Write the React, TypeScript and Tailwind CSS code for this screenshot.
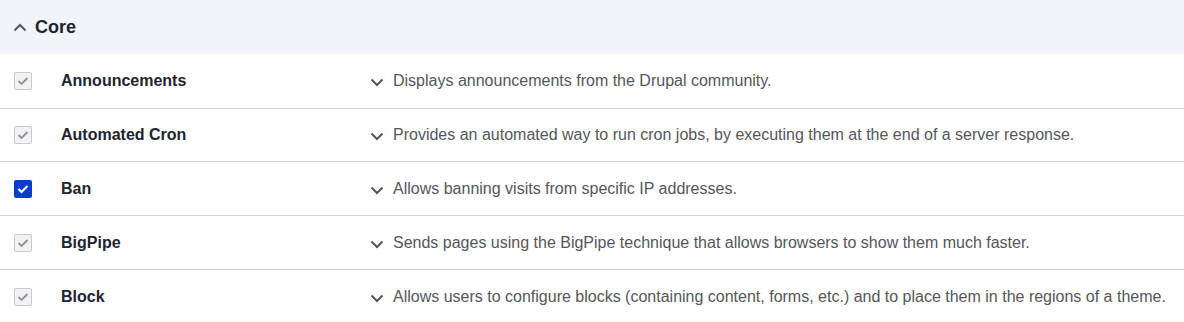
import React from 'react';

type Mod = { name: string; desc: string; locked: boolean; h: string };

const modules: Mod[] = [
  { name: 'Announcements', desc: 'Displays announcements from the Drupal community.', locked: true, h: 'h-[55px]' },
  { name: 'Automated Cron', desc: 'Provides an automated way to run cron jobs, by executing them at the end of a server response.', locked: true, h: 'h-[53px]' },
  { name: 'Ban', desc: 'Allows banning visits from specific IP addresses.', locked: false, h: 'h-[54px]' },
  { name: 'BigPipe', desc: 'Sends pages using the BigPipe technique that allows browsers to show them much faster.', locked: true, h: 'h-[54px]' },
  { name: 'Block', desc: 'Allows users to configure blocks (containing content, forms, etc.) and to place them in the regions of a theme.', locked: true, h: 'h-[54px]' },
];

const Chevron = ({ up }: { up?: boolean }) => (
  <svg width="14" height="9" viewBox="0 0 14 9" fill="none" className={up ? 'rotate-180' : ''}>
    <path d="M1.5 1.5L7 7L12.5 1.5" stroke="#545560" strokeWidth="2" />
  </svg>
);

const Check = ({ locked }: { locked: boolean }) =>
  locked ? (
    <span className="flex h-[18px] w-[18px] items-center justify-center rounded-[2px] border border-[#c9cacf] bg-[#f2f2f3]">
      <svg width="12" height="10" viewBox="0 0 12 10" fill="none">
        <path d="M1.5 5L4.5 8L10.5 2" stroke="#8e929c" strokeWidth="1.8" />
      </svg>
    </span>
  ) : (
    <span className="flex h-[18px] w-[18px] items-center justify-center rounded-[2px] bg-[#003ecc]">
      <svg width="12" height="10" viewBox="0 0 12 10" fill="none">
        <path d="M1.5 5L4.5 8L10.5 2" stroke="#ffffff" strokeWidth="2.2" />
      </svg>
    </span>
  );

export default function App() {
  return (
    <div className="w-[1184px] bg-white font-['Liberation_Sans',Arial,sans-serif] text-[#222330]">
      <div className="flex h-[54px] items-center gap-[8px] bg-[#f3f4f9] pl-[13px]">
        <Chevron up />
        <span className="text-[18px] font-bold">Core</span>
      </div>
      {modules.map((m, i) => (
        <div
          key={m.name}
          className={`flex ${m.h} items-center ${i < modules.length - 1 ? 'border-b border-[#d3d4d9]' : ''}`}
        >
          <div className="w-[61px] pl-[14px]">
            <Check locked={m.locked} />
          </div>
          <div className="w-[309px] text-[16px] font-bold">{m.name}</div>
          <div className="flex items-center gap-[9px] text-[16px] text-[#55565b]">
            <span className="mt-[3px]">
              <Chevron />
            </span>
            <span>{m.desc}</span>
          </div>
        </div>
      ))}
    </div>
  );
}
